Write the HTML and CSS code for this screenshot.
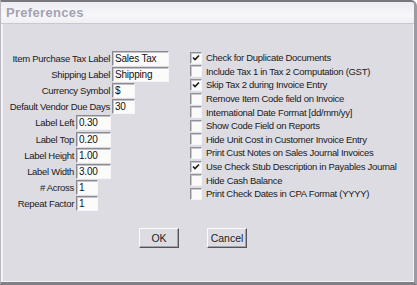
FILE: index.html
```html
<!DOCTYPE html>
<html lang="en">
<head>
    <meta charset="UTF-8">
    <title>Preferences</title>
    <link rel="stylesheet" href="styles.css">
</head>
<body>
    <div class="window">
        <div class="titlebar">Preferences</div>
        <div class="content">
            <div class="panel">
                <div class="fields">
                    <div class="row wide"><label>Item Purchase Tax Label</label><input class="w57" value="Sales Tax"></div>
                    <div class="row wide"><label>Shipping Label</label><input class="w57" value="Shipping"></div>
                    <div class="row wide"><label>Currency Symbol</label><input class="w23" value="$"></div>
                    <div class="row wide"><label>Default Vendor Due Days</label><input class="w23" value="30"></div>
                    <div class="row narrow"><label>Label Left</label><input class="w35" value="0.30"></div>
                    <div class="row narrow"><label>Label Top</label><input class="w35" value="0.20"></div>
                    <div class="row narrow"><label>Label Height</label><input class="w35" value="1.00"></div>
                    <div class="row narrow"><label>Label Width</label><input class="w35" value="3.00"></div>
                    <div class="row narrow"><label># Across</label><input class="w22" value="1"></div>
                    <div class="row narrow"><label>Repeat Factor</label><input class="w22" value="1"></div>
                </div>
                <div class="options">
                    <div class="check"><span class="box"><svg viewBox="0 0 10 10"><path d="M2 4.5 L4 6.5 L8 2.5"/></svg></span>Check for Duplicate Documents</div>
                    <div class="check"><span class="box"></span>Include Tax 1 in Tax 2 Computation (GST)</div>
                    <div class="check"><span class="box"><svg viewBox="0 0 10 10"><path d="M2 4.5 L4 6.5 L8 2.5"/></svg></span>Skip Tax 2 during Invoice Entry</div>
                    <div class="check"><span class="box"></span>Remove Item Code field on Invoice</div>
                    <div class="check"><span class="box"></span>International Date Format [dd/mm/yy]</div>
                    <div class="check"><span class="box"></span>Show Code Field on Reports</div>
                    <div class="check"><span class="box"></span>Hide Unit Cost in Customer Invoice Entry</div>
                    <div class="check"><span class="box"></span>Print Cust Notes on Sales Journal Invoices</div>
                    <div class="check"><span class="box"><svg viewBox="0 0 10 10"><path d="M2 4.5 L4 6.5 L8 2.5"/></svg></span>Use Check Stub Description in Payables Journal</div>
                    <div class="check"><span class="box"></span>Hide Cash Balance</div>
                    <div class="check"><span class="box"></span>Print Check Dates in CPA Format (YYYY)</div>
                </div>
            </div>
            <div class="buttons">
                <button>OK</button>
                <button>Cancel</button>
            </div>
        </div>
    </div>
</body>
</html>
```

FILE: styles.css
```css
body {
    margin: 0;
    font-family: "Liberation Sans", Arial, sans-serif;
    font-size: 9.5px;
    letter-spacing: -0.3px;
    color: #1a1a1a;
}
.window {
    width: 417px;
    height: 285px;
    box-sizing: border-box;
    background: #dddce3;
    border-top: 2px solid #77767e;
    border-right: 3px solid #9c9ba3;
    border-bottom: 3px solid #818088;
    border-left: 1px solid #b9b8c0;
    border-top-right-radius: 6px;
    box-shadow: inset 2px 0 0 #f3f3f6, inset -1px -1px 0 #f3f3f6;
    overflow: hidden;
}
.titlebar {
    height: 21px;
    padding-left: 5px;
    line-height: 22px;
    font-size: 13px;
    font-weight: bold;
    letter-spacing: 0.3px;
    color: #a3a2b0;
    background: linear-gradient(#ebebf2, #f7f7fa 60%, #f0f0f4);
    border-bottom: 1px solid #c9c8d0;
}
.content {
    padding-top: 26px;
}
.panel {
    display: flex;
}
.fields {
    width: 189px;
}
.row {
    display: flex;
    align-items: center;
    height: 16.2px;
}
.row label {
    text-align: right;
    padding-right: 2px;
    white-space: nowrap;
}
.wide label {
    width: 109px;
}
.narrow label {
    width: 73px;
}
input {
    height: 15px;
    box-sizing: border-box;
    margin: 0;
    padding: 0 0 0 2px;
    font-family: inherit;
    font-size: 10px;
    letter-spacing: -0.2px;
    color: #111;
    background: #fbfbfa;
    border: 1px solid;
    border-color: #8a8990 #f6f6f8 #f6f6f8 #8a8990;
    box-shadow: inset 1px 1px 0 #c4c3c9;
    outline: none;
}
.w57 { width: 57px; }
.w35 { width: 35px; }
.w23 { width: 23px; }
.w22 { width: 22px; }
.options {
    margin-top: 1px;
}
.check {
    display: flex;
    align-items: center;
    height: 13.6px;
    white-space: nowrap;
}
.box {
    width: 12px;
    height: 12px;
    box-sizing: border-box;
    margin-right: 4px;
    background: #fafafa;
    border: 1px solid;
    border-color: #908f96 #f4f4f6 #f4f4f6 #908f96;
    box-shadow: inset 1px 1px 0 #c9c8ce;
}
.box svg {
    display: block;
    width: 10px;
    height: 10px;
}
.box path {
    fill: none;
    stroke: #1c1c1c;
    stroke-width: 1.6;
}
.buttons {
    display: flex;
    gap: 28px;
    padding-left: 138px;
    margin-top: 16px;
}
button {
    width: 40px;
    height: 20px;
    padding: 0;
    font-family: inherit;
    font-size: 10.5px;
    color: #222;
    background: #dddce3;
    border: 1px solid;
    border-color: #fbfbfc #55545a #55545a #fbfbfc;
    box-shadow: inset -1px -1px 0 #a3a2a9;
}
```
